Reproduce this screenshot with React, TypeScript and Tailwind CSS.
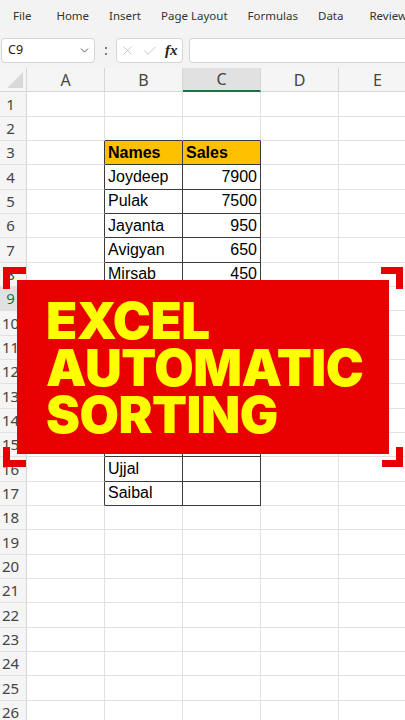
import React from 'react';
import { ChevronDown, X, Check } from 'lucide-react';

const MENU = ['File', 'Home', 'Insert', 'Page Layout', 'Formulas', 'Data', 'Review'];
const COLS = ['A', 'B', 'C', 'D', 'E', 'F'];
const ROWS = Array.from({ length: 26 }, (_, i) => i + 1);

// rows 9-15 sit under the banner, nothing of them shows
const DATA: Record<number, [string, string]> = {
  3: ['Names', 'Sales'],
  4: ['Joydeep', '7900'],
  5: ['Pulak', '7500'],
  6: ['Jayanta', '950'],
  7: ['Avigyan', '650'],
  8: ['Mirsab', '450'],
  16: ['Ujjal', ''],
  17: ['Saibal', ''],
};

const inTable = (r: number) => r >= 3 && r <= 17;

// col: 0 = A, 1 = B, 2 = C ...
function Cell({ row, col }: { row: number; col: number }) {
  const data = DATA[row];
  const darkRight = inTable(row) && col <= 2;
  const darkBottom = row >= 2 && row <= 17 && (col === 1 || col === 2);
  const header = row === 3 && (col === 1 || col === 2);

  let text = '';
  if (data && col === 1) text = data[0];
  if (data && col === 2) text = data[1];

  return (
    <div
      className={[
        'flex items-center overflow-hidden whitespace-nowrap text-[16px] text-black',
        darkRight ? 'border-r border-r-[#3c3c3c]' : 'border-r border-r-[#e1e1e1]',
        darkBottom ? 'border-b border-b-[#3c3c3c]' : 'border-b border-b-[#e1e1e1]',
        header ? 'bg-[#ffc000] font-bold' : 'bg-white',
        col === 2 && !header ? 'justify-end pr-[3px]' : 'pl-[3px]',
      ].join(' ')}
    >
      {text}
    </div>
  );
}

export default function App() {
  return (
    <div className="relative w-[405px] h-[720px] overflow-hidden bg-white font-['Liberation_Sans',sans-serif]">
      {/* Ribbon tabs */}
      <div className="h-[32px] bg-[#f3f3f3] flex items-center gap-[20px] pl-[13px] text-[11.5px] text-[#333] font-['Noto_Sans',sans-serif] whitespace-nowrap">
        {MENU.map((m) => (
          <span key={m} className={m === 'Review' ? 'ml-[6px]' : m === 'File' ? 'mr-[5px]' : ''}>{m}</span>
        ))}
      </div>

      {/* Formula bar */}
      <div className="h-[36px] bg-[#f3f3f3] flex items-start pt-[6px] pl-[1px] font-['Noto_Sans',sans-serif]">
        <div className="w-[94px] h-[25px] bg-white border border-[#d6d6d6] rounded-[4px] flex items-center justify-between pl-[6px] pr-[3px] text-[12.5px] text-[#222]">
          <span>C9</span>
          <ChevronDown size={13} strokeWidth={1.6} className="text-[#444]" />
        </div>
        <div className="w-[21px] h-[25px] flex flex-col items-center justify-center gap-[4px]">
          <div className="w-[2px] h-[2px] rounded-full bg-[#555]" />
          <div className="w-[2px] h-[2px] rounded-full bg-[#555]" />
        </div>
        <div className="w-[67px] h-[25px] bg-white border border-[#d6d6d6] rounded-[4px] flex items-center pl-[3px] gap-[7px]">
          <X size={15} strokeWidth={1.2} className="text-[#b5b5b5]" />
          <Check size={16} strokeWidth={1.2} className="text-[#b5b5b5]" />
          <span className="italic font-bold text-[15px] text-[#222] font-['Liberation_Serif',serif] leading-none">fx</span>
        </div>
        <div className="ml-[6px] flex-1 h-[25px] bg-white border border-[#d6d6d6] rounded-l-[4px] border-r-0" />
      </div>

      {/* Sheet */}
      <div className="grid grid-cols-[27px_78px_78px_78px_78px_78px_78px] auto-rows-[24.33px] w-[495px]">
        {/* column headers */}
        <div className="h-[24px] bg-[#f5f5f5] border-r border-r-[#d6d6d6] border-b border-b-[#d6d6d6] flex items-end justify-end pr-[3px] pb-[3px]">
          <div className="w-0 h-0 border-l-[16px] border-l-transparent border-b-[16px] border-b-[#d9d9d9]" />
        </div>
        {COLS.map((c) => (
          <div
            key={c}
            className={
              c === 'C'
                ? 'h-[24px] bg-[#e1e1e1] border-r border-r-[#d6d6d6] border-b-2 border-b-[#1e7145] flex items-center justify-center text-[16px] text-[#444] font-["Noto_Sans",sans-serif]'
                : 'h-[24px] bg-[#f5f5f5] border-r border-r-[#d6d6d6] border-b border-b-[#d6d6d6] flex items-center justify-center text-[16px] text-[#444] font-["Noto_Sans",sans-serif]'
            }
          >
            {c}
          </div>
        ))}

        {ROWS.map((r) => (
          <React.Fragment key={r}>
            <div
              className={
                r === 9
                  ? 'bg-[#e1e1e1] border-r border-r-[#d6d6d6] border-b border-b-[#e1e1e1] flex items-center justify-center pr-[5px] text-[15px] text-[#1e7145] font-["Noto_Sans",sans-serif]'
                  : 'bg-[#f5f5f5] border-r border-r-[#d6d6d6] border-b border-b-[#e1e1e1] flex items-center justify-center pr-[5px] text-[15px] text-[#444] font-["Noto_Sans",sans-serif]'
              }
            >
              {r}
            </div>
            {[0, 1, 2, 3, 4, 5].map((c) => (
              <Cell key={c} row={r} col={c} />
            ))}
          </React.Fragment>
        ))}
      </div>

      {/* Title banner overlay */}
      <div className="absolute left-[17px] top-[280px] w-[372px] h-[174px] bg-[#e80000] pl-[29px] pt-[17px] font-['Inter',sans-serif] font-black text-[51px] leading-[47px] tracking-[-0.5px] text-[#ffff00]">
        <div>EXCEL</div>
        <div>AUTOMATIC</div>
        <div>SORTING</div>
      </div>

      {/* Corner brackets */}
      <div className="absolute left-[3px] top-[267px] w-[23px] h-[22px] border-l-[7px] border-t-[7px] border-[#e80000]" />
      <div className="absolute left-[381px] top-[267px] w-[22px] h-[22px] border-r-[7px] border-t-[7px] border-[#e80000]" />
      <div className="absolute left-[3px] top-[447px] w-[23px] h-[20px] border-l-[7px] border-b-[7px] border-[#e80000]" />
      <div className="absolute left-[382px] top-[447px] w-[21px] h-[20px] border-r-[7px] border-b-[7px] border-[#e80000]" />
    </div>
  );
}
